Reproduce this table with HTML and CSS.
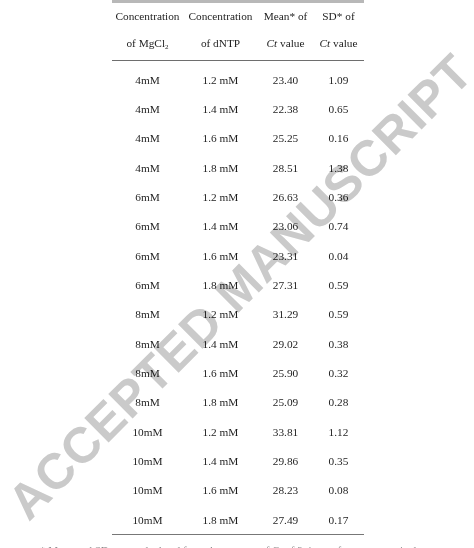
FILE: index.html
```html
<!DOCTYPE html>
<html lang="en">
<head>
<meta charset="utf-8">
<title>Table</title>
<link rel="stylesheet" href="styles.css">
</head>
<body>
<div class="page">
  <table class="data">
    <thead>
      <tr class="h1">
        <th>Concentration</th>
        <th>Concentration</th>
        <th>Mean* of</th>
        <th>SD* of</th>
      </tr>
      <tr class="h2">
        <th>of MgCl<sub>2</sub></th>
        <th>of dNTP</th>
        <th><i>Ct</i> value</th>
        <th><i>Ct</i> value</th>
      </tr>
    </thead>
    <tbody>
      <tr class="first"><td>4mM</td><td>1.2 mM</td><td>23.40</td><td>1.09</td></tr>
      <tr><td>4mM</td><td>1.4 mM</td><td>22.38</td><td>0.65</td></tr>
      <tr><td>4mM</td><td>1.6 mM</td><td>25.25</td><td>0.16</td></tr>
      <tr><td>4mM</td><td>1.8 mM</td><td>28.51</td><td>1.38</td></tr>
      <tr><td>6mM</td><td>1.2 mM</td><td>26.63</td><td>0.36</td></tr>
      <tr><td>6mM</td><td>1.4 mM</td><td>23.06</td><td>0.74</td></tr>
      <tr><td>6mM</td><td>1.6 mM</td><td>23.31</td><td>0.04</td></tr>
      <tr><td>6mM</td><td>1.8 mM</td><td>27.31</td><td>0.59</td></tr>
      <tr><td>8mM</td><td>1.2 mM</td><td>31.29</td><td>0.59</td></tr>
      <tr><td>8mM</td><td>1.4 mM</td><td>29.02</td><td>0.38</td></tr>
      <tr><td>8mM</td><td>1.6 mM</td><td>25.90</td><td>0.32</td></tr>
      <tr><td>8mM</td><td>1.8 mM</td><td>25.09</td><td>0.28</td></tr>
      <tr><td>10mM</td><td>1.2 mM</td><td>33.81</td><td>1.12</td></tr>
      <tr><td>10mM</td><td>1.4 mM</td><td>29.86</td><td>0.35</td></tr>
      <tr><td>10mM</td><td>1.6 mM</td><td>28.23</td><td>0.08</td></tr>
      <tr><td>10mM</td><td>1.8 mM</td><td>27.49</td><td>0.17</td></tr>
    </tbody>
  </table>
  <p class="caption">* Mean and SD were calculated from the average of Ct of 3 times of tests, respectively.</p>
  <div class="watermark">ACCEPTED MANUSCRIPT</div>
</div>
</body>
</html>
```

FILE: styles.css
```css
html, body {
  margin: 0;
  padding: 0;
  background: #ffffff;
}

.page {
  width: 474px;
  height: 548px;
  overflow: hidden;
  position: relative;
  font-family: "Liberation Serif", "Times New Roman", serif;
  color: #1e1e1e;
}

.data {
  margin-left: 112px;
  width: 252px;
  border-collapse: collapse;
  table-layout: fixed;
  font-size: 11.3px;
  border-top: 3px solid #b8b8b8;
  border-bottom: 1.5px solid #777777;
}

.data th, .data td {
  padding: 0;
  text-align: center;
  font-weight: normal;
  white-space: nowrap;
}

.data th:nth-child(1), .data td:nth-child(1) { width: 71px; }
.data th:nth-child(2), .data td:nth-child(2) { width: 75px; }
.data th:nth-child(3), .data td:nth-child(3) { width: 55px; }
.data th:nth-child(4), .data td:nth-child(4) { width: 51px; }

.h1 th {
  height: 25px;
  vertical-align: middle;
}

.h2 th {
  height: 30px;
  vertical-align: middle;
  padding-bottom: 2px;
  border-bottom: 1.3px solid #6e6e6e;
}

.h2 sub {
  font-size: 7px;
  vertical-align: -2px;
  line-height: 0;
}

.data tbody td {
  height: 29.33px;
  vertical-align: middle;
}

.data tbody tr.first td {
  padding-top: 4px;
}

.caption {
  margin: 9px 0 0 40px;
  font-size: 11px;
  color: #8a8a8a;
  white-space: nowrap;
}

.watermark {
  position: absolute;
  left: 240px;
  top: 287px;
  transform: translate(-50%, -50%) rotate(-45deg);
  font-family: "Liberation Sans", Arial, sans-serif;
  font-weight: bold;
  font-size: 50px;
  letter-spacing: 0.5px;
  color: #cacaca;
  white-space: nowrap;
  mix-blend-mode: multiply;
  line-height: 1;
}
```
